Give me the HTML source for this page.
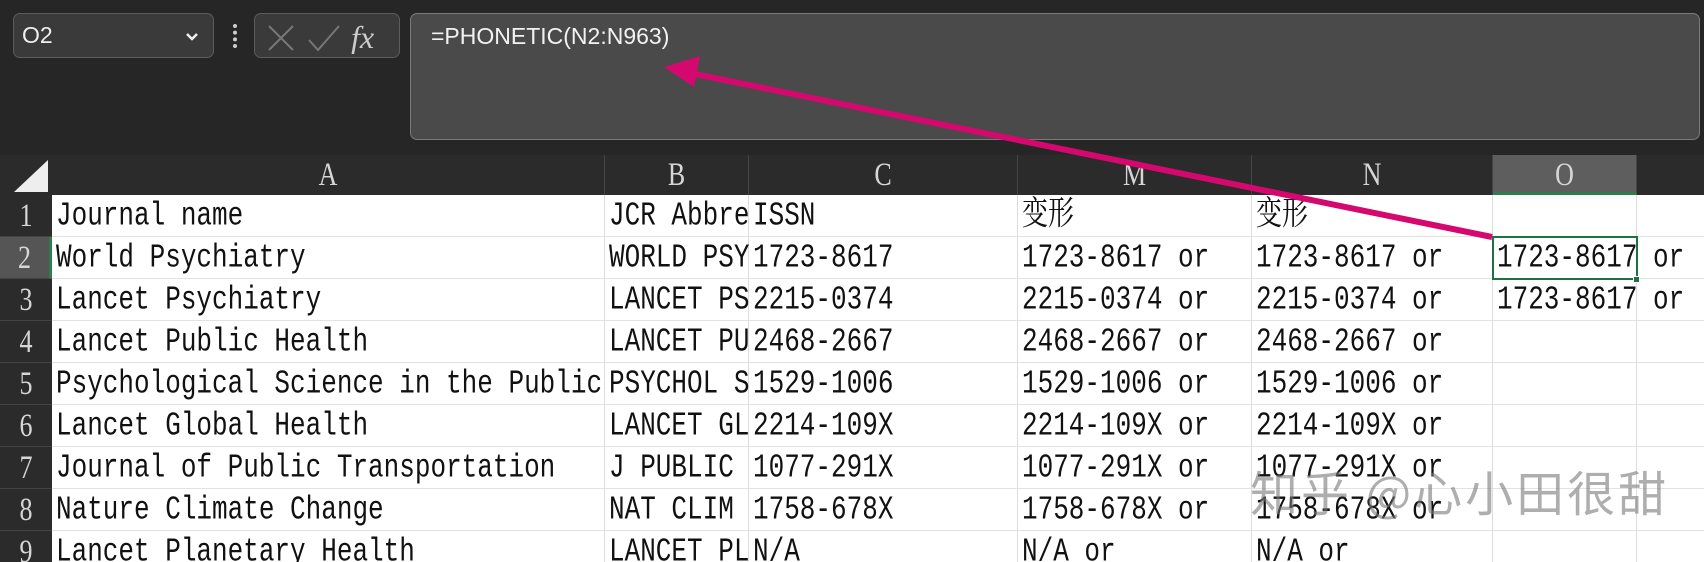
<!DOCTYPE html>
<html><head><meta charset="utf-8"><style>
*{margin:0;padding:0;box-sizing:border-box}
html,body{width:1704px;height:562px;overflow:hidden}
body{background:#262626;position:relative;font-family:"Liberation Sans",sans-serif}
#wrap{position:absolute;left:0;top:0;width:1704px;height:562px;overflow:hidden}
.abs{position:absolute}
.box{position:absolute;background:#3a3a3a;border:1px solid #5c5c5c;border-radius:7px}
.cell{position:absolute;font-family:"Liberation Mono","Noto Serif CJK SC",monospace;font-size:26px;color:#111;white-space:nowrap;overflow:hidden;line-height:42px;height:41px;padding-left:4px}
.cell span{display:inline-block;transform:scaleY(1.3);transform-origin:50% 55%}
.hdr{position:absolute;top:155px;height:40px;color:#d6d6d6;font-family:"Liberation Serif",serif;font-size:26px;text-align:center;line-height:40px;border-right:1px solid #444}
.hdr span,.rn span{display:inline-block;transform:scaleY(1.25)}
.rn{position:absolute;left:0;width:52px;height:42px;color:#d6d6d6;font-family:"Liberation Serif",serif;font-size:26px;text-align:center;line-height:42px;border-bottom:1px solid #444}
</style></head><body><div id="wrap">
<div class="box" style="left:13px;top:13px;width:201px;height:45px"><span class="abs" style="left:8px;top:8px;color:#eee;font-size:23px">O2</span>
<svg class="abs" style="left:170px;top:16px" width="16" height="14"><path d="M3 4L8 9L13 4" stroke="#eee" stroke-width="2.5" fill="none"/></svg></div>
<div class="abs" style="left:233px;top:24px;width:4px;height:24px;border-left:4px dotted #ccc"></div>
<div class="box" style="left:254px;top:13px;width:146px;height:45px">
<svg class="abs" style="left:10px;top:6px" width="130" height="34"><path d="M4 6L28 30M28 6L4 30" stroke="#777" stroke-width="2"/><path d="M44 20L53 30L74 6" stroke="#777" stroke-width="2" fill="none"/><text x="86" y="28" fill="#ccc" font-family="Liberation Serif" font-style="italic" font-size="32">fx</text></svg></div>
<div class="box" style="left:410px;top:13px;width:1290px;height:127px;background:#4a4a4a;border-color:#7a7a7a"><span class="abs" style="left:20px;top:9px;color:#f2f2f2;font-size:23px">=PHONETIC(N2:N963)</span></div>
<div class="abs" style="left:0;top:155px;width:1704px;height:40px;background:#2b2b2b"></div>
<svg class="abs" style="left:8px;top:158px" width="44" height="36"><path d="M40 2V34H6Z" fill="#eee"/></svg>
<div class="hdr" style="left:52px;width:553px"><span>A</span></div>
<div class="hdr" style="left:605px;width:144px"><span>B</span></div>
<div class="hdr" style="left:749px;width:269px"><span>C</span></div>
<div class="hdr" style="left:1018px;width:234px"><span>M</span></div>
<div class="hdr" style="left:1252px;width:241px"><span>N</span></div>
<div class="hdr" style="left:1493px;width:144px;background:#5e5e5e;border-bottom:3px solid #2f7d4f"><span>O</span></div>
<div class="abs" style="left:52px;top:195px;width:1652px;height:367px;background:#fff"></div>
<div class="abs" style="left:0;top:195px;width:52px;height:367px;background:#2b2b2b"></div>
<div id="g"></div>
<script>
var cols=[52,605,749,1018,1252,1493,1637,1704];
var h='';
for(var c=1;c<cols.length-1;c++)h+='<div class="abs" style="left:'+(cols[c]-1)+'px;top:195px;width:1px;height:367px;background:#dcdcdc"></div>';
for(var r=1;r<=9;r++){var y=195+(r-1)*42;
h+='<div class="abs" style="left:52px;top:'+(y+41)+'px;width:1652px;height:1px;background:#e2e2e2"></div>';
h+='<div class="rn" style="top:'+y+'px;'+(r==2?'background:#555;border-right:3px solid #2f7d4f':'')+'"><span>'+r+'</span></div>';}
var d=[["Journal name","JCR Abbreviation","ISSN","变形","变形",""],
["World Psychiatry","WORLD PSYCHIATRY","1723-8617","1723-8617 or","1723-8617 or","1723-8617 or"],
["Lancet Psychiatry","LANCET PSYCHIATRY","2215-0374","2215-0374 or","2215-0374 or","1723-8617 or"],
["Lancet Public Health","LANCET PUBLIC","2468-2667","2468-2667 or","2468-2667 or",""],
["Psychological Science in the Public Interest","PSYCHOL SCI","1529-1006","1529-1006 or","1529-1006 or",""],
["Lancet Global Health","LANCET GLOB","2214-109X","2214-109X or","2214-109X or",""],
["Journal of Public Transportation","J PUBLIC TRANSP","1077-291X","1077-291X or","1077-291X or",""],
["Nature Climate Change","NAT CLIM CHANGE","1758-678X","1758-678X or","1758-678X or",""],
["Lancet Planetary Health","LANCET PLANET","N/A","N/A or","N/A or",""]];
for(var r=0;r<9;r++){var y=195+r*42;for(var c=0;c<6;c++){if(!d[r][c])continue;var w=cols[c+1]-cols[c];if(c==5)w=220;
h+='<div class="cell" style="left:'+cols[c]+'px;top:'+y+'px;width:'+w+'px"><span>'+d[r][c]+'</span></div>';}}
document.getElementById('g').innerHTML=h;
</script>
<div class="abs" style="left:1492px;top:236px;width:146px;height:44px;border:2px solid #1e7145"></div>
<div class="abs" style="left:1633px;top:276px;width:7px;height:7px;background:#1e7145;border:1px solid #fff"></div>
<div class="abs" style="left:1250px;top:462px;font-family:'Noto Sans CJK SC',sans-serif;font-size:48px;line-height:56px;color:rgba(120,120,120,0.6);white-space:nowrap;letter-spacing:3px">知乎 @心小田很甜</div>
<svg class="abs" style="left:0;top:0" width="1704" height="562"><line x1="1492" y1="237" x2="690" y2="73" stroke="#d4086e" stroke-width="6"/><path d="M664 67L700 56L694 87Z" fill="#d4086e"/></svg>
</div></body></html>
